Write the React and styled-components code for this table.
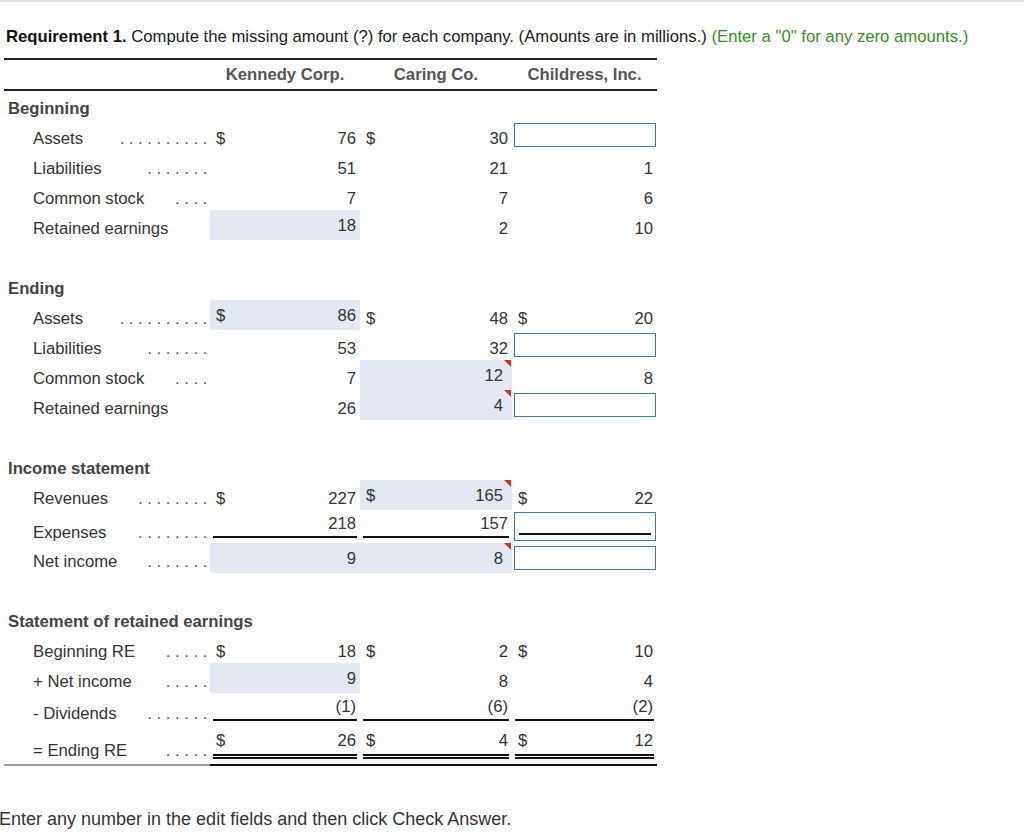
import React from "react";
import styled, { createGlobalStyle } from "styled-components";

const GlobalStyle = createGlobalStyle`
  body {
    margin: 0;
    background: #fff;
  }
`;

const sections = [
  {
    title: "Beginning",
    rows: [
      { label: "Assets", dots: 10, cells: [{ d: true, v: "76" }, { d: true, v: "30" }, { input: true }] },
      { label: "Liabilities", dots: 7, cells: [{ v: "51" }, { v: "21" }, { v: "1" }] },
      { label: "Common stock", dots: 4, cells: [{ v: "7" }, { v: "7" }, { v: "6" }] },
      { label: "Retained earnings", dots: 0, cells: [{ v: "18", hl: true }, { v: "2" }, { v: "10" }] },
    ],
  },
  {
    title: "Ending",
    rows: [
      { label: "Assets", dots: 10, cells: [{ d: true, v: "86", hl: true }, { d: true, v: "48" }, { d: true, v: "20" }] },
      { label: "Liabilities", dots: 7, cells: [{ v: "53" }, { v: "32" }, { input: true }] },
      { label: "Common stock", dots: 4, cells: [{ v: "7" }, { v: "12", hl: true, flag: true }, { v: "8" }] },
      { label: "Retained earnings", dots: 0, cells: [{ v: "26" }, { v: "4", hl: true, flag: true }, { input: true }] },
    ],
  },
  {
    title: "Income statement",
    rows: [
      { label: "Revenues", dots: 8, cells: [{ d: true, v: "227" }, { d: true, v: "165", hl: true, flag: true }, { d: true, v: "22" }] },
      { label: "Expenses", dots: 8, kind: "line", h: 33, mb: 5, pb: 1, cells: [{ v: "218" }, { v: "157" }, { input: true }] },
      { label: "Net income", dots: 7, cells: [{ v: "9", hl: true }, { v: "8", hl: true, flag: true }, { input: true }] },
    ],
  },
  {
    title: "Statement of retained earnings",
    rows: [
      { label: "Beginning RE", dots: 5, cells: [{ d: true, v: "18" }, { d: true, v: "2" }, { d: true, v: "10" }] },
      { label: "+ Net income", dots: 5, cells: [{ v: "9", hl: true }, { v: "8" }, { v: "4" }] },
      { label: "- Dividends", dots: 7, kind: "line", h: 30, mb: 2, pb: 0, cells: [{ v: "(1)" }, { v: "(6)" }, { v: "(2)" }] },
      { label: "= Ending RE", dots: 5, kind: "double", h: 42, mb: 5, pb: 4, last: true, cells: [{ d: true, v: "26" }, { d: true, v: "4" }, { d: true, v: "12" }] },
    ],
  },
];

const App = () => {
  return (
    <Page>
      <GlobalStyle />
      <Title>
        <b>Requirement 1.</b> Compute the missing amount (?) for each company. (Amounts are in millions.){" "}
        <Hint>(Enter a "0" for any zero amounts.)</Hint>
      </Title>

      <Sheet>
        <colgroup>
          <col style={{ width: 206 }} />
          <col style={{ width: 150 }} />
          <col style={{ width: 152 }} />
          <col style={{ width: 145 }} />
        </colgroup>
        <thead>
          <tr>
            <HeadCell />
            <HeadCell>Kennedy Corp.</HeadCell>
            <HeadCell>Caring Co.</HeadCell>
            <HeadCell>Childress, Inc.</HeadCell>
          </tr>
        </thead>
        <tbody>
          {sections.map((s, si) => (
            <React.Fragment key={s.title}>
              <tr>
                <SectionCell colSpan={4} $spaced={si > 0}>
                  {s.title}
                </SectionCell>
              </tr>
              {s.rows.map((r) => {
                const kind = r.kind || "plain";
                return (
                  <Row key={r.label} $h={r.h || 30}>
                    <LabelCell $pb={r.pb ?? 2} $last={r.last}>
                      <LabelLine>
                        <span>{r.label}</span>
                        {r.dots > 0 && <Dots>{".".repeat(r.dots)}</Dots>}
                      </LabelLine>
                    </LabelCell>
                    {r.cells.map((c, ci) => (
                      <ValueCell key={ci} $hl={c.hl} $last={r.last}>
                        {c.flag && <Flag />}
                        {c.input ? (
                          <Field type="text" $line={kind === "line"} />
                        ) : (
                          <Amount $kind={kind} $mb={r.mb ?? 2} $hl={c.hl} $flag={c.flag}>
                            <span>{c.d ? "$" : ""}</span>
                            <span>{c.v}</span>
                          </Amount>
                        )}
                      </ValueCell>
                    ))}
                  </Row>
                );
              })}
            </React.Fragment>
          ))}
        </tbody>
      </Sheet>

      <Footer>Enter any number in the edit fields and then click Check Answer.</Footer>
    </Page>
  );
};

const Page = styled.div`
  border-top: 2px solid #dde1ea;
  padding: 25px 0 0 4px;
  font-family: "Liberation Sans", Arial, sans-serif;
  color: #333;
  min-height: 800px;
`;

const Title = styled.p`
  margin: 0 0 12px 2px;
  font-size: 16.7px;
  line-height: 19px;
  color: #1a1a1a;
  white-space: nowrap;

  b {
    font-weight: bold;
    color: #111;
  }
`;

const Hint = styled.span`
  color: #3a8a2a;
`;

const Sheet = styled.table`
  width: 653px;
  border-collapse: collapse;
  table-layout: fixed;
  font-size: 16.7px;
  line-height: 19px;

  td,
  th {
    box-sizing: border-box;
  }
`;

const HeadCell = styled.th`
  height: 31px;
  padding: 0;
  border-top: 2px solid #222;
  border-bottom: 2px solid #222;
  font-weight: bold;
  color: #555;
  text-align: center;
  vertical-align: middle;
`;

const SectionCell = styled.td`
  height: ${(p) => (p.$spaced ? 60 : 30)}px;
  padding: 0 0 2px 4px;
  vertical-align: bottom;
  font-weight: bold;
  color: #444;
`;

const Row = styled.tr`
  height: ${(p) => p.$h}px;
`;

const LabelCell = styled.td`
  padding: 0 0 ${(p) => p.$pb}px 29px;
  vertical-align: bottom;
  color: #333;
  border-bottom: ${(p) => (p.$last ? "2px solid #999" : "none")};
`;

const LabelLine = styled.div`
  display: flex;
  align-items: baseline;
  white-space: nowrap;
`;

const Dots = styled.span`
  margin-left: auto;
  margin-right: -2px;
  letter-spacing: 4.6px;
  color: #555;
`;

const ValueCell = styled.td`
  position: relative;
  padding: 0;
  vertical-align: bottom;
  background: ${(p) => (p.$hl ? "#e4e8f2" : "transparent")};
  border-bottom: ${(p) => (p.$last ? "2px solid #111" : "none")};
`;

const amountPad = (p) => {
  if (p.$kind === "line") return 3;
  if (p.$kind === "double") return 4;
  return p.$hl ? 3 : 0;
};

const Amount = styled.div`
  display: flex;
  justify-content: space-between;
  align-items: baseline;
  margin: 0 3px ${(p) => p.$mb}px 3px;
  padding: 0 ${(p) => (p.$flag ? 6 : 1)}px ${amountPad}px 3px;
  color: #333;
  border-bottom: ${(p) =>
    p.$kind === "line" ? "2px solid #111" : p.$kind === "double" ? "5px double #111" : "none"};
`;

const Field = styled.input`
  display: block;
  box-sizing: border-box;
  width: 142px;
  height: ${(p) => (p.$line ? 29 : 24)}px;
  margin: 0 1px ${(p) => (p.$line ? 2 : 3)}px 2px;
  border: 1px solid #3b7aa3;
  border-radius: 0;
  outline: none;
  background: ${(p) =>
    p.$line
      ? "#fff linear-gradient(#111, #111) no-repeat 4px calc(100% - 5px) / calc(100% - 8px) 2px"
      : "#fff"};
  font: inherit;
`;

const Flag = styled.span`
  position: absolute;
  top: 0;
  right: 1px;
  width: 0;
  height: 0;
  border-top: 7px solid #c4392d;
  border-left: 7px solid transparent;
`;

const Footer = styled.p`
  margin: 42px 0 0 -5px;
  font-size: 18px;
  line-height: 22px;
  color: #333;
`;

export default App;
